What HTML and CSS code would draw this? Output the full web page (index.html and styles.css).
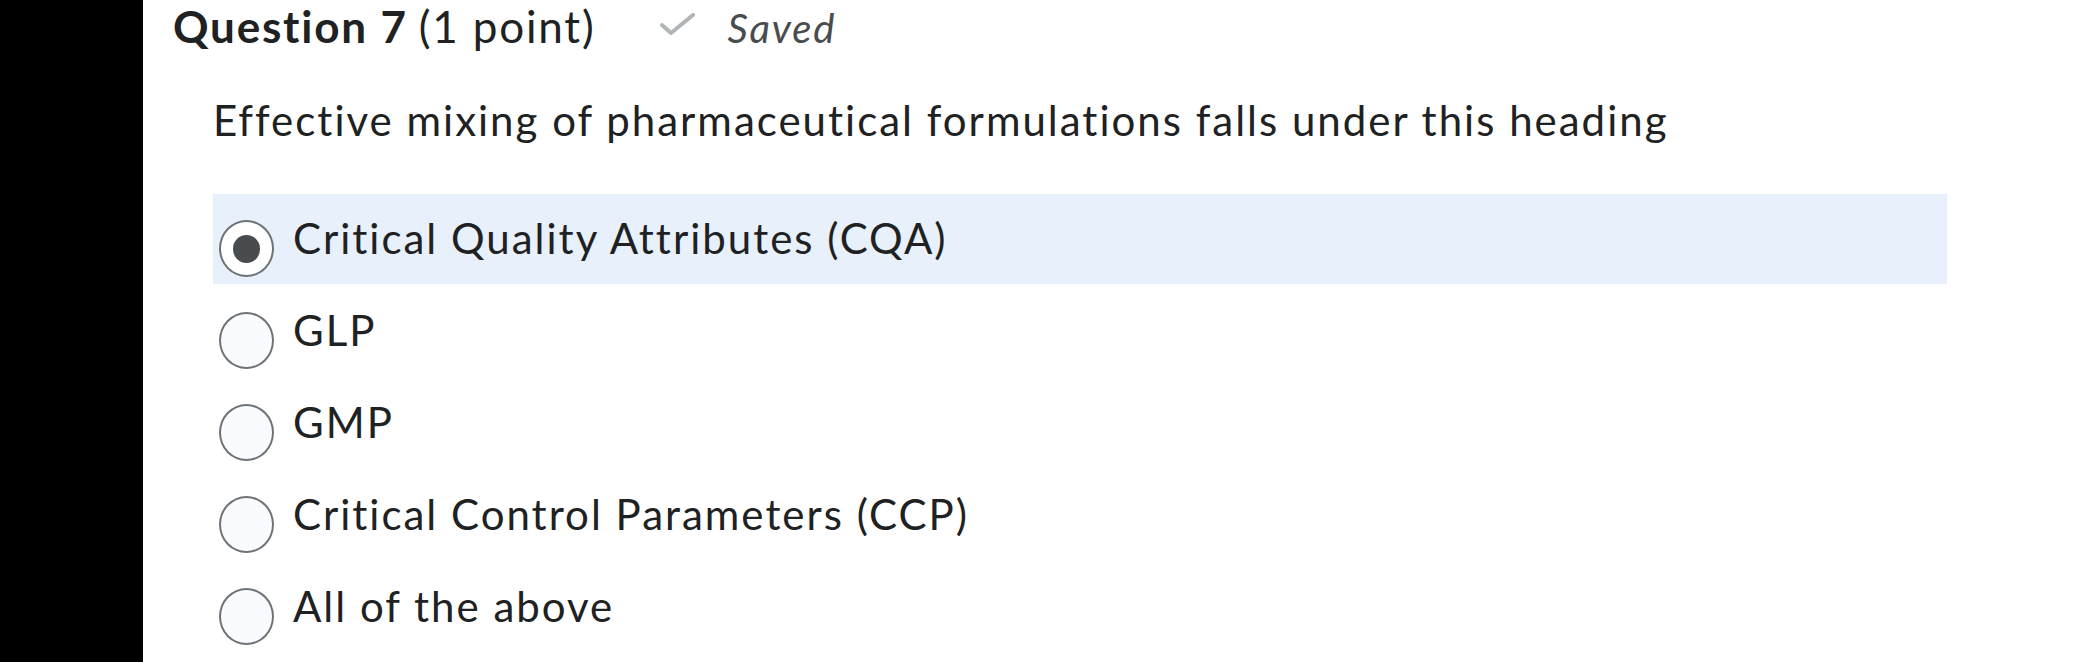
FILE: index.html
```html
<!DOCTYPE html>
<html lang="en">

<head>
    <meta charset="UTF-8">
    <meta name="viewport" content="width=device-width, initial-scale=1.0">
    <title>Question 7</title>
    <link rel="stylesheet" href="styles.css">
</head>

<body>
    <div class="page">
        <div class="side"></div>
        <div class="quiz">
            <div class="question-head">
                <span class="q-title">Question 7</span>
                <span class="q-points">(1 point)</span>
                <span class="saved">
                    <svg class="check" viewBox="0 0 37 22" width="37" height="22">
                        <path d="M3 12 L12 20 L34 2" fill="none" stroke="#b1b4b6" stroke-width="4" stroke-linecap="round" stroke-linejoin="round"/>
                    </svg>
                    <em>Saved</em>
                </span>
            </div>
            <div class="question-body">
                <p class="prompt">Effective mixing of pharmaceutical formulations falls under this heading</p>
                <ul class="options">
                    <li class="option selected"><span class="radio"></span><span class="label">Critical Quality Attributes (CQA)</span></li>
                    <li class="option"><span class="radio"></span><span class="label">GLP</span></li>
                    <li class="option"><span class="radio"></span><span class="label">GMP</span></li>
                    <li class="option"><span class="radio"></span><span class="label">Critical Control Parameters (CCP)</span></li>
                    <li class="option"><span class="radio"></span><span class="label">All of the above</span></li>
                </ul>
            </div>
        </div>
    </div>
</body>

</html>
```

FILE: styles.css
```css
html, body {
    margin: 0;
    background: #fff;
}

body {
    font-family: Lato, "Noto Sans", sans-serif;
    color: #202122;
}

.page {
    display: flex;
    height: 662px;
    overflow: hidden;
}

.side {
    width: 143px;
    flex: none;
    background: #000;
}

.quiz {
    flex: 1;
    padding-left: 30px;
}

.question-head {
    display: flex;
    align-items: baseline;
    padding-top: 1px;
    line-height: 50px;
    font-size: 44px;
    letter-spacing: 1.8px;
}

.q-title {
    font-weight: 700;
}

.q-points {
    margin-left: 11px;
}

.saved {
    display: inline-flex;
    align-items: baseline;
    margin-left: 64px;
    font-size: 40px;
    letter-spacing: 1.8px;
    color: #494c4e;
}

.check {
    align-self: center;
    margin-right: 31px;
    position: relative;
    top: -4px;
}

.question-body {
    padding-left: 40px;
    width: 1734px;
}

.prompt {
    margin: 44px 0 0;
    font-size: 42px;
    line-height: 47px;
    letter-spacing: 2px;
}

.options {
    list-style: none;
    margin: 50px 0 0;
    padding: 0;
    display: flex;
    flex-direction: column;
    gap: 2px;
}

.option {
    display: flex;
    align-items: flex-start;
    height: 90px;
    box-sizing: border-box;
    padding: 21px 0 0 6px;
}

.option.selected {
    background: #e7f0fb;
}

.radio {
    flex: none;
    width: 55px;
    height: 57px;
    margin-top: 5px;
    box-sizing: border-box;
    border: 2px solid #6e7376;
    border-radius: 50%;
    background: #f9fbff;
    display: flex;
    align-items: center;
    justify-content: center;
}

.option.selected .radio {
    background: #fff;
}

.option.selected .radio::after {
    content: "";
    width: 27px;
    height: 28px;
    border-radius: 50%;
    background: #494c4e;
}

.label {
    margin-left: 19px;
    font-size: 42px;
    line-height: 47px;
    letter-spacing: 2px;
}
```
